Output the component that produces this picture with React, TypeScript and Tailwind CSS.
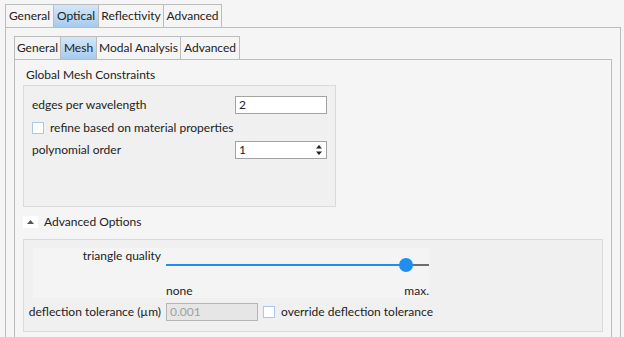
import React from "react"

const font = { fontFamily: "Lato, 'Noto Sans', sans-serif" }

function Tab({ label, width, active }: { label: string; width: string; active?: boolean }) {
  return (
    <div
      className={
        "-ml-px first:ml-0 flex h-[23px] items-center justify-center whitespace-nowrap border border-b-0 border-[#bcbcbc] text-[12px] text-[#222] " +
        width +
        " " +
        (active ? "bg-gradient-to-b from-[#d3e7f8] to-[#a6cbed]" : "bg-[#f5f5f5]")
      }
    >
      {label}
    </div>
  )
}

function Checkbox() {
  return <div className="h-[12px] w-[12px] border border-[#a9c9e9] bg-white" />
}

function TextBox({ value, spin }: { value: string; spin?: boolean }) {
  return (
    <div className="flex h-[18px] w-[92px] items-center justify-between border border-[#a3a3a3] bg-white pl-[3px] pr-[4px] text-[12px]">
      <span>{value}</span>
      {spin && (
        <svg width="6" height="12" viewBox="0 0 6 12">
          <path d="M3 1 L6 4.5 L0 4.5 Z" fill="#222" />
          <path d="M0 7.5 L6 7.5 L3 11 Z" fill="#222" />
        </svg>
      )}
    </div>
  )
}

export default function App() {
  return (
    <div
      style={font}
      className="h-[337px] w-[624px] overflow-hidden bg-[#f5f5f5] pl-[5px] pr-[3px] pt-[4px] text-[#222]"
    >
      <div className="flex">
        <Tab label="General" width="w-[49px]" />
        <Tab label="Optical" width="w-[46px]" active />
        <Tab label="Reflectivity" width="w-[66px]" />
        <Tab label="Advanced" width="w-[59px]" />
      </div>

      <div className="h-[320px] border border-[#bcbcbc] px-[8px] pt-[8px]">
        <div className="flex">
          <Tab label="General" width="w-[47px]" />
          <Tab label="Mesh" width="w-[37px]" active />
          <Tab label="Modal Analysis" width="w-[85px]" />
          <Tab label="Advanced" width="w-[60px]" />
        </div>

        <div className="h-[300px] border border-[#bcbcbc] px-[8px] pt-[8px] text-[12px]">
          <div className="pl-[3px] leading-[14px]">Global Mesh Constraints</div>

          <div className="mt-[3px] h-[122px] w-[313px] border border-[#dadada] bg-[#f0f0f0] px-[8px] pt-[10px]">
            <div className="flex items-center justify-between">
              <span>edges per wavelength</span>
              <TextBox value="2" />
            </div>
            <div className="mt-[5px] flex h-[18px] items-center gap-[6px]">
              <Checkbox />
              <span>refine based on material properties</span>
            </div>
            <div className="mt-[4px] flex items-center justify-between">
              <span>polynomial order</span>
              <TextBox value="1" spin />
            </div>
          </div>

          <div className="mt-[9px] flex h-[12px] items-center gap-[6px] leading-[14px]">
            <div className="flex h-[12px] w-[15px] items-center justify-center bg-white">
              <svg width="7" height="4" viewBox="0 0 7 4">
                <path d="M3.5 0 L7 4 L0 4 Z" fill="#555" />
              </svg>
            </div>
            <span>Advanced Options</span>
          </div>

          <div className="mt-[11px] h-[93px] border border-[#dadada] bg-[#f0f0f0] pl-[9px] pt-[8px]">
            <div className="flex w-[396px] bg-[#f4f4f4]">
              <div className="w-[128px] pt-[1px] text-right leading-[14px]">triangle quality</div>
              <div className="ml-[5px] w-[263px]">
                <div className="relative mt-[10px] h-[14px]">
                  <div className="absolute left-0 top-[6px] h-[2px] w-[240px] bg-[#1e8ff0]" />
                  <div className="absolute right-0 top-[6px] h-[2px] w-[23px] bg-[#6e6e6e]" />
                  <div className="absolute left-[233px] top-0 h-[14px] w-[14px] rounded-full bg-[#1e8ff0]" />
                </div>
                <div className="mt-[12px] flex justify-between leading-[14px]">
                  <span>none</span>
                  <span>max.</span>
                </div>
              </div>
            </div>
            <div className="mt-[5px] flex items-center">
              <div className="flex w-[128px] justify-end whitespace-nowrap">deflection tolerance (µm)</div>
              <div className="ml-[5px] flex h-[18px] w-[92px] items-center border border-[#b5b5b5] bg-[#e6e6e6] pl-[3px] text-[#a0a0a0]">
                0.001
              </div>
              <div className="ml-[5px]">
                <Checkbox />
              </div>
              <span className="ml-[6px]">override deflection tolerance</span>
            </div>
          </div>
        </div>
      </div>
    </div>
  )
}
